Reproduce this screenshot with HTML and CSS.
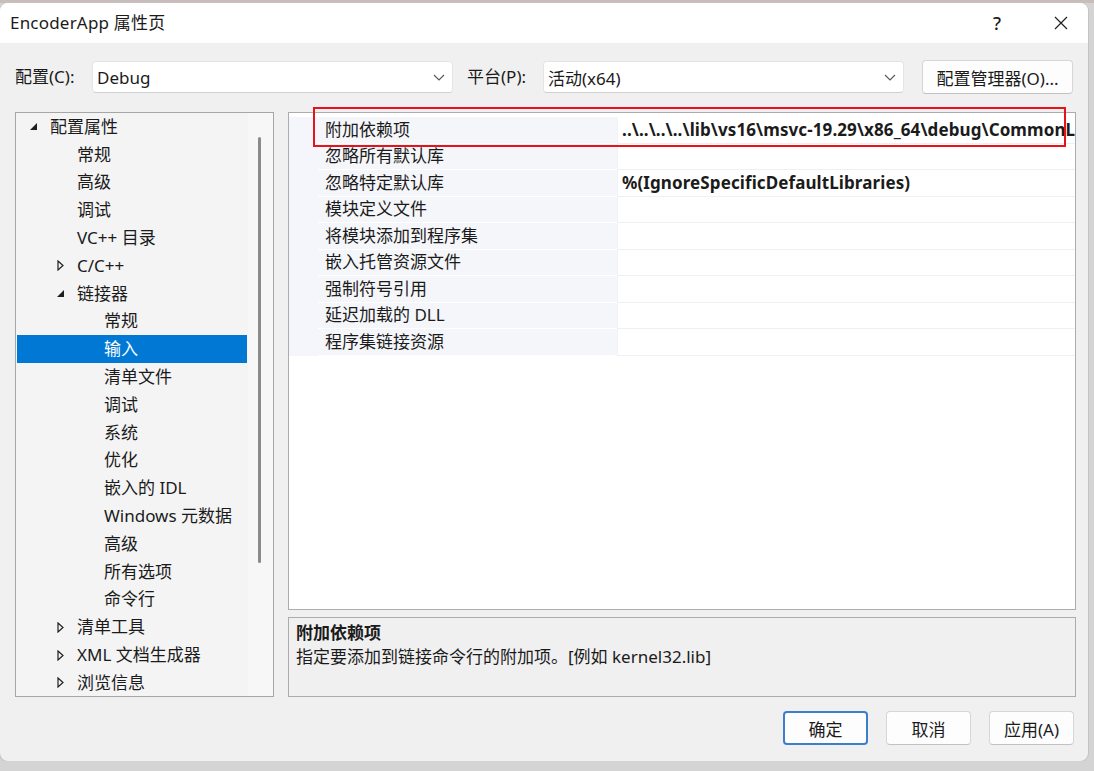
FILE: index.html
```html
<!DOCTYPE html>
<html lang="zh-CN">
<head>
    <meta charset="UTF-8">
    <meta name="viewport" content="width=device-width, initial-scale=1.0">
    <title>EncoderApp 属性页</title>
    <link rel="stylesheet" href="styles.css">
</head>
<body>
    <div class="top-strip"></div>
    <div class="dialog">
        <div class="titlebar">
            <span class="title">EncoderApp 属性页</span>
            <div class="caption-btns">
                <span class="caption-btn help">?</span>
                <span class="caption-btn">
                    <svg width="14" height="14" viewBox="0 0 14 14"><path d="M1 1 L13 13 M13 1 L1 13" stroke="#1f1f1f" stroke-width="1.2" fill="none"/></svg>
                </span>
            </div>
        </div>

        <div class="content">
            <div class="config-row">
                <label class="field-label cfg">配置(C):</label>
                <div class="combo">
                    <span>Debug</span>
                    <svg width="12" height="7" viewBox="0 0 12 7"><path d="M1 1 L6 6 L11 1" stroke="#5a5a5a" stroke-width="1.2" fill="none"/></svg>
                </div>
                <label class="field-label plat">平台(P):</label>
                <div class="combo">
                    <span>活动(x64)</span>
                    <svg width="12" height="7" viewBox="0 0 12 7"><path d="M1 1 L6 6 L11 1" stroke="#5a5a5a" stroke-width="1.2" fill="none"/></svg>
                </div>
                <button class="btn manager">配置管理器(O)...</button>
            </div>

            <div class="main">
                <div class="tree">
                    <ul class="tree-list">
                        <li class="lvl0"><span class="arrow"><svg width="7" height="7" viewBox="0 0 7 7"><polygon points="7,0 7,7 0,7" fill="#1f1f1f"/></svg></span>配置属性</li>
                        <li class="lvl1"><span class="arrow"></span>常规</li>
                        <li class="lvl1"><span class="arrow"></span>高级</li>
                        <li class="lvl1"><span class="arrow"></span>调试</li>
                        <li class="lvl1"><span class="arrow"></span>VC++ 目录</li>
                        <li class="lvl1"><span class="arrow"><svg width="7" height="11" viewBox="0 0 7 11"><polygon points="1,1 6,5.5 1,10" fill="none" stroke="#1f1f1f" stroke-width="1.2"/></svg></span>C/C++</li>
                        <li class="lvl1"><span class="arrow"><svg width="7" height="7" viewBox="0 0 7 7"><polygon points="7,0 7,7 0,7" fill="#1f1f1f"/></svg></span>链接器</li>
                        <li class="lvl2"><span class="arrow"></span>常规</li>
                        <li class="lvl2 selected"><span class="arrow"></span>输入</li>
                        <li class="lvl2"><span class="arrow"></span>清单文件</li>
                        <li class="lvl2"><span class="arrow"></span>调试</li>
                        <li class="lvl2"><span class="arrow"></span>系统</li>
                        <li class="lvl2"><span class="arrow"></span>优化</li>
                        <li class="lvl2"><span class="arrow"></span>嵌入的 IDL</li>
                        <li class="lvl2"><span class="arrow"></span>Windows 元数据</li>
                        <li class="lvl2"><span class="arrow"></span>高级</li>
                        <li class="lvl2"><span class="arrow"></span>所有选项</li>
                        <li class="lvl2"><span class="arrow"></span>命令行</li>
                        <li class="lvl1"><span class="arrow"><svg width="7" height="11" viewBox="0 0 7 11"><polygon points="1,1 6,5.5 1,10" fill="none" stroke="#1f1f1f" stroke-width="1.2"/></svg></span>清单工具</li>
                        <li class="lvl1"><span class="arrow"><svg width="7" height="11" viewBox="0 0 7 11"><polygon points="1,1 6,5.5 1,10" fill="none" stroke="#1f1f1f" stroke-width="1.2"/></svg></span>XML 文档生成器</li>
                        <li class="lvl1"><span class="arrow"><svg width="7" height="11" viewBox="0 0 7 11"><polygon points="1,1 6,5.5 1,10" fill="none" stroke="#1f1f1f" stroke-width="1.2"/></svg></span>浏览信息</li>
                    </ul>
                    <div class="scrollbar"><div class="thumb"></div></div>
                </div>

                <div class="right">
                    <div class="grid">
                        <div class="prop-row"><span class="margin"></span><span class="name">附加依赖项</span><span class="value">..\..\..\..\lib\vs16\msvc-19.29\x86_64\debug\CommonLib.lib;%(AdditionalDependencies)</span></div>
                        <div class="prop-row"><span class="margin"></span><span class="name">忽略所有默认库</span><span class="value"></span></div>
                        <div class="prop-row"><span class="margin"></span><span class="name">忽略特定默认库</span><span class="value">%(IgnoreSpecificDefaultLibraries)</span></div>
                        <div class="prop-row"><span class="margin"></span><span class="name">模块定义文件</span><span class="value"></span></div>
                        <div class="prop-row"><span class="margin"></span><span class="name">将模块添加到程序集</span><span class="value"></span></div>
                        <div class="prop-row"><span class="margin"></span><span class="name">嵌入托管资源文件</span><span class="value"></span></div>
                        <div class="prop-row"><span class="margin"></span><span class="name">强制符号引用</span><span class="value"></span></div>
                        <div class="prop-row"><span class="margin"></span><span class="name">延迟加载的 DLL</span><span class="value"></span></div>
                        <div class="prop-row"><span class="margin"></span><span class="name">程序集链接资源</span><span class="value"></span></div>
                        <div class="highlight-box"></div>
                    </div>
                    <div class="desc">
                        <div class="desc-title">附加依赖项</div>
                        <div class="desc-text">指定要添加到链接命令行的附加项。[例如 kernel32.lib]</div>
                    </div>
                </div>
            </div>

            <div class="footer">
                <button class="btn default">确定</button>
                <button class="btn">取消</button>
                <button class="btn">应用(A)</button>
            </div>
        </div>
    </div>
</body>
</html>
```

FILE: styles.css
```css
/* General */
body {
    margin: 0;
    background: #d4d4d4;
    font-family: 'Noto Sans', 'Noto Sans CJK SC', sans-serif;
    font-size: 17px;
    color: #1b1b1b;
}

.top-strip {
    height: 3px;
    background: #cbbcbc;
}

.dialog {
    width: 1088px;
    height: 758px;
    background: #f0f0f0;
    border-radius: 8px;
    overflow: hidden;
    box-shadow: 0 0 0 1px #c4c4c4;
}

/* Title bar */
.titlebar {
    height: 40px;
    background: #fff;
    display: flex;
    align-items: center;
    justify-content: space-between;
    padding-left: 10px;
}

.title {
    line-height: 20px;
    letter-spacing: 0.2px;
}

.caption-btns {
    display: flex;
    gap: 18px;
    padding-right: 4px;
}

.caption-btn {
    width: 46px;
    height: 30px;
    display: flex;
    align-items: center;
    justify-content: center;
}

.help {
    font-size: 18px;
    font-weight: 500;
}

/* Content */
.content {
    padding: 17px 12px 0 15px;
}

.config-row {
    display: flex;
    align-items: center;
    height: 34px;
}

.field-label {
    line-height: 20px;
}

.field-label.cfg {
    width: 77px;
}

.field-label.plat {
    width: 76px;
    margin-left: 14px;
}

.combo {
    width: 361px;
    height: 32px;
    box-sizing: border-box;
    background: #fff;
    border: 1px solid #e4e4e4;
    border-bottom-color: #d0d0d0;
    border-radius: 4px;
    display: flex;
    align-items: center;
    justify-content: space-between;
    padding: 0 7px 0 4px;
}

.btn {
    font-family: inherit;
    font-size: 17px;
    color: #1b1b1b;
    background: #fdfdfd;
    border: 1px solid #d6d6d6;
    border-bottom-color: #c2c2c2;
    border-radius: 4px;
    height: 34px;
    padding: 0;
    box-sizing: border-box;
}

.btn.manager {
    width: 151px;
    margin-left: 18px;
}

.btn.default {
    border: 2px solid #3b7fcc;
}

/* Main area */
.main {
    display: flex;
    gap: 14px;
    margin-top: 18px;
    height: 585px;
}

.tree {
    width: 259px;
    box-sizing: border-box;
    border: 1px solid #a6a6a6;
    background: #f4f4f4;
    display: flex;
    overflow: hidden;
}

.tree-list {
    list-style: none;
    margin: 0;
    padding: 0 1px;
    width: 232px;
    box-sizing: border-box;
}

.tree-list li {
    height: 27.8px;
    display: flex;
    align-items: center;
    white-space: nowrap;
    line-height: 20px;
}

.tree-list li.lvl0 { padding-left: 13px; }
.tree-list li.lvl1 { padding-left: 40px; }
.tree-list li.lvl2 { padding-left: 67px; }

.tree-list li.selected {
    background: #0078d4;
    color: #fff;
}

.arrow {
    width: 20px;
    display: flex;
    align-items: center;
}

.scrollbar {
    width: 25px;
    background: #f7f7f7;
}

.thumb {
    width: 3px;
    height: 426px;
    margin: 24px 0 0 10px;
    background: #8b8b8b;
    border-radius: 2px;
}

.right {
    width: 788px;
    display: flex;
    flex-direction: column;
    gap: 7px;
}

/* Property grid */
.grid {
    position: relative;
    height: 498px;
    box-sizing: border-box;
    border: 1px solid #acacac;
    background: #fff;
    padding-top: 4px;
}

.prop-row {
    display: flex;
    height: 26.5px;
}

.prop-row .margin {
    width: 29px;
    background: #f4f6fb;
}

.prop-row .name {
    width: 299px;
    box-sizing: border-box;
    padding-left: 7px;
    background: #f5f6fa;
    border-bottom: 1px solid #fff;
    display: flex;
    align-items: center;
    line-height: 20px;
    white-space: nowrap;
}

.prop-row .value {
    flex: 1;
    min-width: 0;
    box-sizing: border-box;
    padding-left: 4px;
    border-bottom: 1px solid #eef0f5;
    border-left: 1px solid #f2f3f6;
    font-weight: 700;
    line-height: 25px;
    letter-spacing: 0.1px;
    white-space: nowrap;
    overflow: hidden;
}

/* red annotation box drawn over the first row */
.highlight-box {
    position: absolute;
    left: 24px;
    top: -6px;
    width: 753px;
    height: 40px;
    box-sizing: border-box;
    border: 2px solid #e8131a;
}

/* Description panel */
.desc {
    height: 80px;
    box-sizing: border-box;
    border: 1px solid #acacac;
    background: #f0f0f0;
    padding: 3px 7px;
    line-height: 24px;
}

.desc-title {
    font-weight: 700;
}

/* Footer */
.footer {
    display: flex;
    justify-content: flex-end;
    gap: 18px;
    margin-top: 14px;
    padding-right: 2px;
}

.footer .btn {
    width: 85px;
}
```
